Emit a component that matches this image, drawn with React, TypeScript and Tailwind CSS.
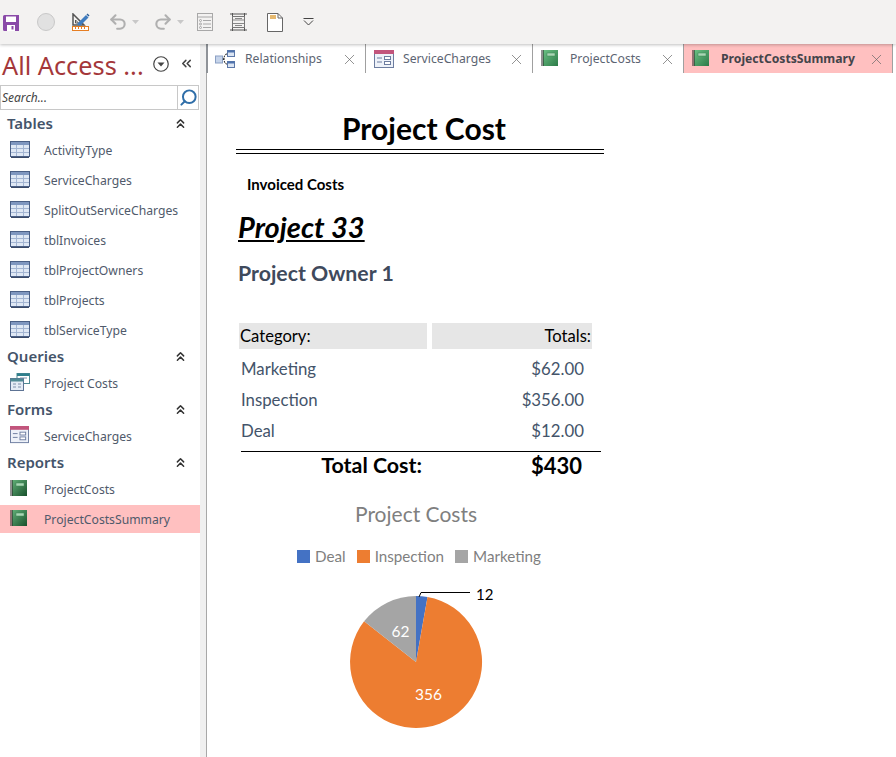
import React from "react";
import { Undo2, Redo2, ChevronsUp, ChevronsLeft, X, Search } from "lucide-react";

const TableIcon = () => (
  <svg width="20" height="17" viewBox="0 0 20 17">
    <rect x="0.5" y="0.5" width="19" height="15" fill="#dfe8f5" stroke="#4a5f86" />
    <rect x="1" y="1" width="18" height="3" fill="#7f97c0" />
    <path d="M1 7.5H19M1 11.5H19M6.5 4V15M13.5 4V15" stroke="#a3b5d3" fill="none" />
    <path d="M1 16.5H19" stroke="#3a4a68" />
  </svg>
);
const QueryIcon = () => (
  <svg width="20" height="18" viewBox="0 0 20 18">
    <rect x="7" y="0.5" width="12.5" height="10" fill="#fff" stroke="#4f8a94" />
    <rect x="7" y="0.5" width="12.5" height="2.5" fill="#2f7f8c" />
    <rect x="0.5" y="5.5" width="13" height="12" fill="#e4ebf5" stroke="#5d7394" />
    <rect x="0.5" y="5.5" width="13" height="3" fill="#4f8a94" />
    <path d="M3 11H6M8 11H11M3 14H6M8 14H11M10 5H17" stroke="#7f90aa" fill="none" />
  </svg>
);
const FormIcon = ({ w = 19 }: { w?: number }) => (
  <svg width={w} height={w * 0.9} viewBox="0 0 20 18">
    <rect x="0.5" y="0.5" width="19" height="17" fill="#eef2f9" stroke="#6d7da0" />
    <rect x="0" y="0" width="20" height="4" fill="#c2557c" />
    <path d="M3 8H8M3 12H8" stroke="#6d7da0" fill="none" />
    <rect x="10.5" y="6.5" width="6" height="3" fill="#fff" stroke="#6d7da0" />
    <rect x="10.5" y="11.5" width="6" height="3" fill="#fff" stroke="#6d7da0" />
  </svg>
);
const ReportIcon = ({ bright = false }: { bright?: boolean }) => (
  <svg width="17" height="17" viewBox="0 0 17 17">
    <defs>
      <linearGradient id={bright ? "rb" : "rd"} x1="0" y1="0" x2="1" y2="1">
        <stop offset="0" stopColor={bright ? "#6cc285" : "#62b078"} />
        <stop offset="1" stopColor={bright ? "#2c7a48" : "#17502b"} />
      </linearGradient>
    </defs>
    <rect x="2" y="0" width="15" height="16" fill={`url(#${bright ? "rb" : "rd"})`} />
    <rect x="6" y="3" width="8" height="3" fill="#a9d6b4" stroke="#3d8453" strokeWidth="0.5" />
    <path d="M0 1H3M0 3H3M0 5H3M0 7H3M0 9H3M0 11H3M0 13H3M0 15H3" stroke="#222" fill="none" />
  </svg>
);
const RelIcon = () => (
  <svg width="20" height="18" viewBox="0 0 20 18">
    <rect x="0.5" y="6" width="7" height="7" fill="#c6d4ea" stroke="#8ba0c4" />
    <rect x="12.5" y="0.5" width="7" height="6" fill="#dbe5f3" stroke="#5d78a8" />
    <rect x="12.5" y="0.5" width="7" height="2" fill="#4f73ad" />
    <rect x="12.5" y="11.5" width="7" height="6" fill="#dbe5f3" stroke="#5d78a8" />
    <rect x="12.5" y="11.5" width="7" height="2" fill="#4f73ad" />
    <path d="M8 9H10M12 4C9 4 10 7 8 9C10 11 9 14 12 14" stroke="#222" fill="none" strokeDasharray="2 1" />
  </svg>
);

const SaveIcon = () => (
  <svg width="16" height="16" viewBox="0 0 16 16">
    <path d="M0 1.5A1.5 1.5 0 0 1 1.5 0H16V16H1.5A1.5 1.5 0 0 1 0 14.5Z" fill="#8a4aa8" />
    <rect x="3" y="1.5" width="10" height="5.5" fill="#fff" />
    <rect x="4" y="10" width="8" height="6" fill="#fff" />
    <rect x="8.5" y="11" width="2" height="3.5" fill="#8a4aa8" />
  </svg>
);
const DesignIcon = () => (
  <svg width="18" height="18" viewBox="0 0 18 18">
    <path d="M1 1V12H12Z" fill="none" stroke="#555" strokeWidth="1.5" />
    <path d="M3.5 7V10H6.5Z" fill="none" stroke="#555" />
    <path d="M5 11L14 2L16.5 4.5L8 13Z" fill="#3f7cbf" />
    <path d="M14.5 1.5L15.5 0.5L17.5 2.5L16.5 3.5Z" fill="#2b5c96" />
    <rect x="0.5" y="13.5" width="16" height="4" fill="#fff" stroke="#e67e22" />
    <path d="M3.5 14V16M6.5 14V16M9.5 14V16M12.5 14V16" stroke="#e67e22" />
  </svg>
);
const PropIcon = () => (
  <svg width="16" height="18" viewBox="0 0 16 18">
    <rect x="0.5" y="0.5" width="15" height="17" fill="#f3f2f1" stroke="#a8a8a8" />
    <path d="M1 4H15" stroke="#a8a8a8" />
    <circle cx="3.5" cy="7.5" r="1" fill="none" stroke="#a8a8a8" />
    <circle cx="3.5" cy="11" r="1" fill="none" stroke="#a8a8a8" />
    <circle cx="3.5" cy="14.5" r="1" fill="none" stroke="#a8a8a8" />
    <path d="M6 7.5H14M6 11H14M6 14.5H14" stroke="#a8a8a8" />
  </svg>
);
const SectionsIcon = () => (
  <svg width="17" height="18" viewBox="0 0 17 18">
    <path d="M0 1H17M0 17H17" stroke="#555" />
    <path d="M2.5 0V18M14.5 0V18" stroke="#555" />
    <rect x="2.5" y="3.5" width="12" height="11" fill="#f3f2f1" stroke="#777" />
    <path d="M3 7H14M3 10.5H14M5 5.5H12M5 12.5H12" stroke="#888" />
  </svg>
);
const PageIcon = () => (
  <svg width="16" height="19" viewBox="0 0 16 19">
    <path d="M0.5 0.5H11L15.5 5V18.5H0.5Z" fill="#fff" stroke="#666" />
    <path d="M11 0.5V5H15.5" fill="none" stroke="#666" />
    <rect x="3" y="2" width="6" height="4" fill="#e6b96f" />
  </svg>
);

const Caret = () => (
  <svg width="7" height="4" viewBox="0 0 7 4"><path d="M0 0H7L3.5 4Z" fill="#c8c8c8" /></svg>
);

function Toolbar() {
  return (
    <div className="h-[44px] bg-[#f3f2f1] shadow-[0_1px_3px_rgba(0,0,0,0.25)] relative z-10 flex items-center shrink-0">
      <div className="ml-[3px] mt-[1px]"><SaveIcon /></div>
      <div className="ml-[18px] w-[18px] h-[18px] rounded-full bg-[#e1e1e1] border border-[#c8c8c8]" />
      <div className="ml-[17px]"><DesignIcon /></div>
      <Undo2 className="ml-[18px] text-[#b0b0b0]" size={20} strokeWidth={2.5} />
      <div className="ml-[4px]"><Caret /></div>
      <Redo2 className="ml-[14px] text-[#b0b0b0]" size={20} strokeWidth={2.5} />
      <div className="ml-[4px]"><Caret /></div>
      <div className="ml-[13px]"><PropIcon /></div>
      <div className="ml-[17px]"><SectionsIcon /></div>
      <div className="ml-[20px]"><PageIcon /></div>
      <svg className="ml-[20px]" width="11" height="8" viewBox="0 0 11 8">
        <path d="M0.5 0.5H10.5M1 2.5L5.5 7L10 2.5" fill="none" stroke="#444" />
      </svg>
    </div>
  );
}

function GroupHeader({ label }: { label: string }) {
  return (
    <div className="h-[23px] flex items-center justify-between pl-[7px] pr-[12px] text-[15px] font-semibold text-[#44546a]">
      <span>{label}</span>
      <ChevronsUp size={15} strokeWidth={2.4} className="text-[#333]" />
    </div>
  );
}

function NavItem({ icon, label, active }: { icon: React.ReactNode; label: string; active?: boolean }) {
  return (
    <div className={`flex items-center text-[12.2px] text-[#505a6b] ${active ? "bg-[#ffc0c0] h-[28px] my-px" : "h-[30px]"}`}>
      <div className="w-[44px] pl-[10px] flex items-center -translate-y-[1px]">{icon}</div>
      <span className="translate-y-[1px]">{label}</span>
    </div>
  );
}

function Sidebar() {
  const tables = ["ActivityType", "ServiceCharges", "SplitOutServiceCharges", "tblInvoices", "tblProjectOwners", "tblProjects", "tblServiceType"];
  return (
    <div className="w-[200px] shrink-0 bg-white pt-[6px]">
      <div className="h-[35px] flex items-center pl-[2px]">
        <span className="text-[25.3px] text-[#a4373a] leading-none w-[150px] whitespace-nowrap -translate-y-[2px]">All Access ...</span>
        <svg width="16" height="16" viewBox="0 0 16 16" className="ml-px -translate-y-[4px]">
          <circle cx="8" cy="8" r="7.25" fill="none" stroke="#444" strokeWidth="1.2" />
          <path d="M4.5 6.5H11.5L8 10.5Z" fill="#444" />
        </svg>
        <ChevronsLeft size={15} strokeWidth={2.4} className="ml-[10px] text-[#444] -translate-y-[4px]" />
      </div>
      <div className="h-[25px] w-[199px] border border-[#c8c8c8] flex items-center">
        <span className="flex-1 pl-px text-[12px] italic text-[#444]">Search...</span>
        <div className="w-[21px] h-full border-l border-[#c8c8c8] flex items-center justify-center">
          <Search size={19} strokeWidth={2.5} className="text-[#2f6ea8] -scale-x-100" />
        </div>
      </div>
      <div className="h-[2px]" />
      <GroupHeader label="Tables" />
      {tables.map((t) => <NavItem key={t} icon={<TableIcon />} label={t} />)}
      <GroupHeader label="Queries" />
      <NavItem icon={<QueryIcon />} label="Project Costs" />
      <GroupHeader label="Forms" />
      <NavItem icon={<FormIcon />} label="ServiceCharges" />
      <GroupHeader label="Reports" />
      <NavItem icon={<ReportIcon />} label="ProjectCosts" />
      <NavItem icon={<ReportIcon />} label="ProjectCostsSummary" active />
    </div>
  );
}

function Tab({ icon, label, width, active, first }: { icon: React.ReactNode; label: string; width: number; active?: boolean; first?: boolean }) {
  return (
    <div
      className={`h-full flex items-center shrink-0 border-r border-[#a0a0a0] pr-[7px] pt-[2px] text-[12.2px] ${first ? "border-l-2 border-l-[#8f9398] pl-[7px]" : "pl-[8px]"} ${active ? "bg-[#ffc0c0] font-bold text-[#44444a]" : "text-[#5c6472]"}`}
      style={{ width }}
    >
      <div className={`flex items-center -translate-y-[1px] ${first ? "w-[30px]" : "w-[29px]"}`}>{icon}</div>
      <span className="flex-1 whitespace-nowrap">{label}</span>
      <X size={17} strokeWidth={1} className="text-[#666]" />
    </div>
  );
}

const PieChart = () => (
  <svg width="160" height="150" viewBox="0 0 160 150" className="block">
    <path d="M66 82L66 16A66 66 0 0 1 77.5 17Z" fill="#4472c4" />
    <path d="M66 82L77.5 17A66 66 0 1 1 14.1 41.3Z" fill="#ed7d31" />
    <path d="M66 82L14.1 41.3A66 66 0 0 1 66 16Z" fill="#a5a5a5" />
    <path d="M69 17L71 12.5H120" fill="none" stroke="#000" strokeWidth="1" />
    <text x="126" y="20" fontSize="15" fill="#000" fontFamily="Lato">12</text>
    <text x="41.5" y="57" fontSize="15.5" fill="#fff" fontFamily="Lato">62</text>
    <text x="65" y="120" fontSize="15.5" fill="#fff" fontFamily="Lato">356</text>
  </svg>
);

function Legend({ color, label }: { color: string; label: string }) {
  return (
    <div className="flex items-center gap-[5px]">
      <span className="w-[13px] h-[13px]" style={{ background: color }} />
      <span>{label}</span>
    </div>
  );
}

function Report() {
  const rows = [["Marketing", "$62.00"], ["Inspection", "$356.00"], ["Deal", "$12.00"]];
  return (
    <div className="flex-1 bg-white [font-family:Lato,sans-serif] pl-[29px] pt-[36px]">
      <div className="w-[376px] text-center text-[30px] font-bold text-black leading-[38px]">Project Cost</div>
      <div className="w-[368px] h-[5px] mt-[2px] border-y border-black" />
      <div className="pl-[11px] mt-[21px] text-[15px] font-bold text-black leading-[18px] [font-family:'Open_Sans',sans-serif]">Invoiced Costs</div>
      <div className="pl-[2px] mt-[17px] text-[29px] font-bold italic underline text-black leading-[34px]">Project 33</div>
      <div className="pl-[2px] mt-[16px] text-[21.3px] font-bold text-[#3f4a5c] leading-[26px]">Project Owner 1</div>
      <div className="ml-[3px] mt-[37px] flex gap-[5px] h-[26px] text-[16.6px] text-black leading-[26px]">
        <div className="w-[188px] bg-[#e6e6e6] pl-px -translate-y-0">Category:</div>
        <div className="w-[160px] bg-[#e6e6e6] text-right pr-px">Totals:</div>
      </div>
      <div className="ml-[5px] w-[343px] mt-[4px] text-[16.8px] text-[#44546a]">
        {rows.map(([a, b]) => (
          <div key={a} className="h-[31px] flex items-center justify-between">
            <span>{a}</span><span>{b}</span>
          </div>
        ))}
      </div>
      <div className="ml-[5px] w-[360px] mt-[5px] border-t border-black h-[28px] flex items-center font-bold text-black">
        <span className="w-[181px] text-right text-[21.4px]">Total Cost:</span>
        <span className="w-[160px] text-right text-[22px]">$430</span>
      </div>
      <div className="mt-[21px] w-[360px] flex flex-col items-center text-[#7f7f7f]">
        <div className="text-[21px] leading-[28px]">Project Costs</div>
        <div className="mt-[18px] flex gap-[11px] text-[15.2px] leading-[20px] ml-[6px]">
          <Legend color="#4472c4" label="Deal" />
          <Legend color="#ed7d31" label="Inspection" />
          <Legend color="#a5a5a5" label="Marketing" />
        </div>
      </div>
      <div className="ml-[114px] mt-[14px]"><PieChart /></div>
    </div>
  );
}

export default function App() {
  return (
    <div className="w-[896px] h-[757px] overflow-hidden flex flex-col bg-white [font-family:'Open_Sans',sans-serif]">
      <Toolbar />
      <div className="flex-1 flex min-h-0">
        <Sidebar />
        <div className="w-[6px] shrink-0 bg-[#f0f0f0]" />
        <div className="w-px shrink-0 bg-[#a8a8a8]" />
        <div className="flex-1 flex flex-col min-w-0">
          <div className="h-[29px] flex shrink-0 bg-white -ml-px">
            <Tab first icon={<RelIcon />} label="Relationships" width={160} />
            <Tab icon={<FormIcon w={20} />} label="ServiceCharges" width={167} />
            <Tab icon={<ReportIcon bright />} label="ProjectCosts" width={151} />
            <Tab icon={<ReportIcon bright />} label="ProjectCostsSummary" width={209} active />
          </div>
          <Report />
        </div>
      </div>
    </div>
  );
}
